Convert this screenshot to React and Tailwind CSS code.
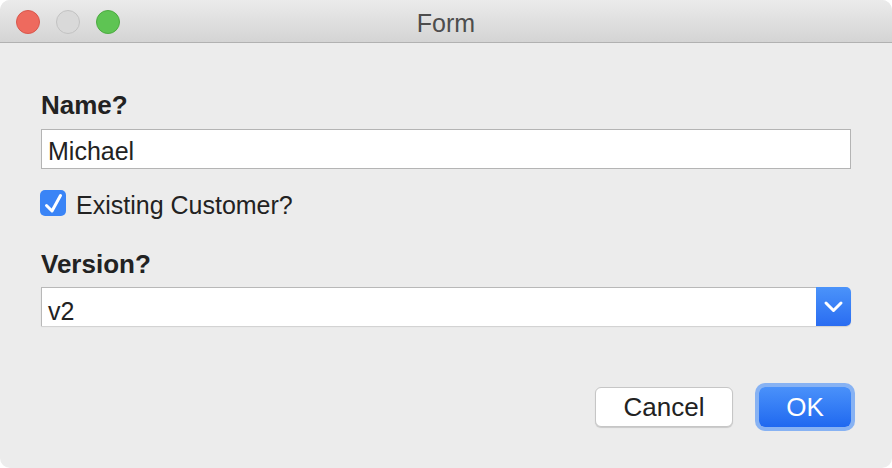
export default function App() {
  const font = { fontFamily: '"Liberation Sans", Arial, sans-serif' };
  return (
    <div className="w-[892px] h-[468px] bg-white" style={font}>
      <div className="w-[892px] h-[468px] rounded-[10px] overflow-hidden bg-[#ececec] flex flex-col">
        {/* title bar */}
        <div className="relative h-[43px] bg-gradient-to-b from-[#ebebeb] to-[#d4d4d4] border-b border-[#b1b1b1] flex-none">
          <div className="absolute left-[16px] top-[10px] flex gap-[16px]">
            <div className="w-[24px] h-[24px] rounded-full bg-[#ee6a5e] border border-[#d8574c]" />
            <div className="w-[24px] h-[24px] rounded-full bg-[#d9d9d9] border border-[#c2c2c2]" />
            <div className="w-[24px] h-[24px] rounded-full bg-[#5ec453] border border-[#4caa40]" />
          </div>
          <div className="pt-[11px] text-center text-[25px] leading-[25px] text-[#4d4d4d]">Form</div>
        </div>

        {/* body */}
        <div className="px-[41px] flex flex-col">
          <div className="mt-[49px] text-[26px] leading-[26px] font-bold text-[#222]">Name?</div>
          <div className="mt-[11px] h-[40px] bg-white border border-[#b4b4b4] pl-[6px] pt-[9px]">
            <div className="text-[25px] leading-[25px] text-[#222]">Michael</div>
          </div>

          <div className="mt-[21px] ml-[-1px] flex items-start gap-[10px]">
            <div className="w-[26px] h-[26px] rounded-[5px] bg-[#3a84f6] flex-none">
              <svg width="26" height="26" viewBox="0 0 26 26">
                <path d="M6.5 15.5 L12 21 L20.5 5.5" fill="none" stroke="white" strokeWidth="3" strokeLinecap="round" strokeLinejoin="round" />
              </svg>
            </div>
            <div className="pt-[2px] text-[25px] leading-[26px] text-[#222]">Existing Customer?</div>
          </div>

          <div className="mt-[33px] text-[26px] leading-[26px] font-bold text-[#222]">Version?</div>
          <div className="mt-[10px] h-[39px] flex shadow-[0_1px_1px_rgba(0,0,0,0.12)] rounded-r-[5px]">
            <div className="flex-1 bg-white border-t border-l border-[#b8b8b8] pl-[6px] pt-[11px]">
              <div className="text-[25px] leading-[25px] text-[#222]">v2</div>
            </div>
            <div className="w-[35px] rounded-r-[5px] bg-gradient-to-b from-[#4b93fa] to-[#2a6cf1] flex items-center justify-center">
              <svg width="35" height="39" viewBox="0 0 35 39">
                <path d="M10 16 L17.5 23.5 L25 16" fill="none" stroke="white" strokeWidth="3" strokeLinecap="round" strokeLinejoin="round" />
              </svg>
            </div>
          </div>

          <div className="mt-[61px] flex justify-end gap-[26px]">
            <div className="w-[138px] h-[40px] bg-white border border-[#c6c6c6] rounded-[6px] shadow-[0_1px_1px_rgba(0,0,0,0.15)] flex items-center justify-center text-[26px] text-[#222]">
              Cancel
            </div>
            <div className="w-[92px] h-[40px] rounded-[6px] bg-gradient-to-b from-[#4a91fa] to-[#1f68f0] ring-[4px] ring-[#87b2f3] flex items-center justify-center text-[26px] text-white">
              OK
            </div>
          </div>
        </div>
      </div>
    </div>
  );
}
